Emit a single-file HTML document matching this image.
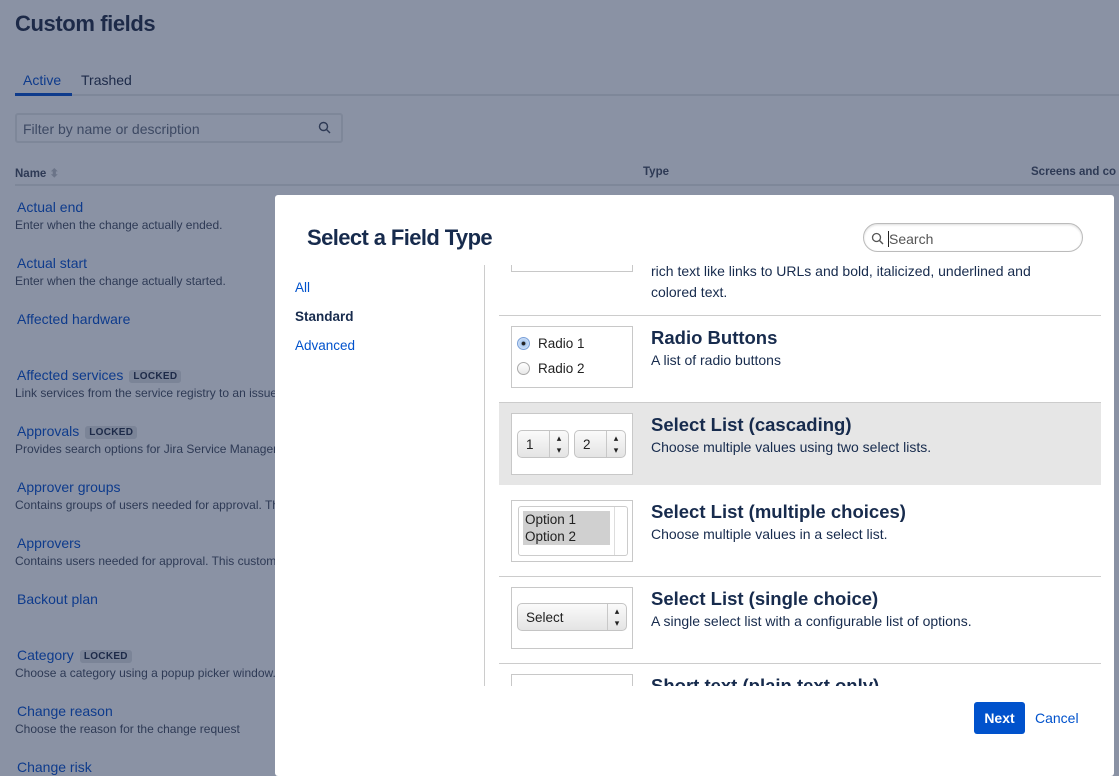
<!DOCTYPE html>
<html><head><style>
*{box-sizing:border-box;margin:0;padding:0}
body{width:1119px;height:776px;overflow:hidden;background:#8a92a4;font-family:"Liberation Sans",sans-serif;position:relative;color:#1d2a48}
.a{position:absolute}
.lk{color:#0e3b8c;font-size:14px}
.ds{color:#2e3a55;font-size:12px}
.badge{display:inline-block;background:#7b8497;color:#1d2a48;font-size:10px;font-weight:bold;padding:1px 4px;border-radius:3px;margin-left:6px;vertical-align:1px;letter-spacing:.3px}
.modal{position:absolute;left:275px;top:195px;width:839px;height:581px;background:#fff;border-radius:3px}
.row{position:absolute;left:224px;width:602px;border-bottom:1px solid #ccc}
.pv{position:absolute;left:12px;width:122px;height:62px;border:1px solid #c8c8c8;background:#fff}
.t{position:absolute;left:152px;font-size:18.5px;font-weight:bold;color:#172b4d}
.d{position:absolute;left:152px;font-size:14px;color:#172b4d}
.sel{position:absolute;height:28px;border:1px solid #c4c4c4;border-radius:5px;background:linear-gradient(#fafafa,#e4e4e4);font-size:13.5px;color:#222}
.arr{position:absolute;right:0;top:0;width:19px;height:26px;border-left:1px solid #c8c8c8;font-size:9px;text-align:center;line-height:12px;padding-top:1px}
</style></head><body>
<div class="a" style="left:15px;top:11px;font-size:22px;font-weight:bold;letter-spacing:-0.4px;color:#1d2a48">Custom fields</div>
<div class="a" style="left:23px;top:72px;font-size:14px;color:#0e3b8c">Active</div>
<div class="a" style="left:81px;top:72px;font-size:14px;color:#1d2a48">Trashed</div>
<div class="a" style="left:15px;top:94px;width:1104px;height:2px;background:#7e8799"></div>
<div class="a" style="left:15px;top:93px;width:57px;height:3px;background:#0e3b8c"></div>
<div class="a" style="left:15px;top:113px;width:328px;height:30px;border:2px solid #7e8799;border-radius:3px;background:#8a92a4"></div>
<div class="a" style="left:23px;top:121px;font-size:14px;color:#3d4963">Filter by name or description</div>
<svg class="a" style="left:318px;top:121px" width="13" height="13" viewBox="0 0 13 13"><circle cx="5.5" cy="5.5" r="4" fill="none" stroke="#2e3a55" stroke-width="1.4"/><path d="M8.5 8.5L12 12" stroke="#2e3a55" stroke-width="1.4"/></svg>
<div class="a" style="left:15px;top:166px;font-size:11.5px;font-weight:bold;color:#2e3a55">Name <span style="color:#6b7488">⬍</span></div>
<div class="a" style="left:643px;top:166px;font-size:11.5px;font-weight:bold;color:#2e3a55">Type</div>
<div class="a" style="left:1031px;top:166px;font-size:11.5px;font-weight:bold;color:#2e3a55;white-space:nowrap">Screens and co</div>
<div class="a" style="left:15px;top:184px;width:1104px;height:2px;background:#7e8799"></div>

<div class="a lk" style="left:17px;top:199px">Actual end</div><div class="a ds" style="left:15px;top:218px">Enter when the change actually ended.</div>
<div class="a lk" style="left:17px;top:255px">Actual start</div><div class="a ds" style="left:15px;top:274px">Enter when the change actually started.</div>
<div class="a lk" style="left:17px;top:311px">Affected hardware</div>
<div class="a lk" style="left:17px;top:367px">Affected services<span class="badge">LOCKED</span></div><div class="a ds" style="left:15px;top:386px;white-space:nowrap">Link services from the service registry to an issue</div>
<div class="a lk" style="left:17px;top:423px">Approvals<span class="badge">LOCKED</span></div><div class="a ds" style="left:15px;top:442px;white-space:nowrap">Provides search options for Jira Service Management</div>
<div class="a lk" style="left:17px;top:479px">Approver groups</div><div class="a ds" style="left:15px;top:498px;white-space:nowrap">Contains groups of users needed for approval. This</div>
<div class="a lk" style="left:17px;top:535px">Approvers</div><div class="a ds" style="left:15px;top:554px;white-space:nowrap">Contains users needed for approval. This custom fie</div>
<div class="a lk" style="left:17px;top:591px">Backout plan</div>
<div class="a lk" style="left:17px;top:647px">Category<span class="badge">LOCKED</span></div><div class="a ds" style="left:15px;top:666px;white-space:nowrap">Choose a category using a popup picker window.</div>
<div class="a lk" style="left:17px;top:703px">Change reason</div><div class="a ds" style="left:15px;top:722px;white-space:nowrap">Choose the reason for the change request</div>
<div class="a lk" style="left:17px;top:759px">Change risk</div>

<div class="modal">
<div class="a" style="left:32px;top:30px;font-size:22px;font-weight:bold;letter-spacing:-0.6px;color:#172b4d">Select a Field Type</div>
<div class="a" style="left:588px;top:28px;width:220px;height:29px;border:1px solid #bbb;border-radius:15px;box-shadow:inset 0 1px 2px #ddd"></div>
<svg class="a" style="left:596px;top:37px" width="13" height="13" viewBox="0 0 13 13"><circle cx="5.5" cy="5.5" r="4" fill="none" stroke="#555" stroke-width="1.3"/><path d="M8.5 8.5L12 12" stroke="#555" stroke-width="1.4"/></svg>
<div class="a" style="left:613px;top:36px;width:1px;height:16px;background:#222"></div>
<div class="a" style="left:614px;top:36px;font-size:14px;color:#555">Search</div>
<div class="a" style="left:20px;top:85px;font-size:13.5px;color:#0052cc">All</div>
<div class="a" style="left:20px;top:114px;font-size:13.5px;font-weight:bold;color:#172b4d">Standard</div>
<div class="a" style="left:20px;top:143px;font-size:13.5px;color:#0052cc">Advanced</div>
<div class="a" style="left:209px;top:70px;width:1px;height:421px;background:#ccc"></div>
<div class="a" style="left:210px;top:70px;width:616px;height:421px;overflow:hidden">
 <div class="row" style="left:14px;top:-60px;height:111px;">
  <div class="pv" style="top:5px;"><div class="a" style="left:8px;top:-2px;width:106px;height:52px;border:1px solid #bbb;border-radius:3px"></div><div class="a" style="right:8px;top:39px;font-size:8px;color:#888">◢</div></div>
  <div class="d" style="top:56px;line-height:21px">rich text like links to URLs and bold, italicized, underlined and<br>colored text.</div>
 </div>
 <div class="row" style="left:14px;top:51px;height:87px">
  <div class="pv" style="top:10px">
   <div class="a" style="left:5px;top:10px;width:13px;height:13px;border-radius:50%;border:1px solid #7aa0d8;background:radial-gradient(#222 20%,#a9c8f0 30%,#e6f0fd)"></div>
   <div class="a" style="left:26px;top:9px;font-size:13.5px;color:#222">Radio 1</div>
   <div class="a" style="left:5px;top:35px;width:13px;height:13px;border-radius:50%;border:1px solid #aaa;background:linear-gradient(#fff,#e8e8e8)"></div>
   <div class="a" style="left:26px;top:34px;font-size:13.5px;color:#222">Radio 2</div>
  </div>
  <div class="t" style="top:11px">Radio Buttons</div><div class="d" style="top:36px">A list of radio buttons</div>
 </div>
 <div class="row" style="left:14px;top:138px;height:85px;background:#e6e6e6;border-bottom:3px solid #fff">
  <div class="pv" style="top:10px">
   <div class="sel" style="left:5px;top:16px;width:52px"><span class="a" style="left:8px;top:6px">1</span><div class="arr">▴<br>▾</div></div>
   <div class="sel" style="left:62px;top:16px;width:52px"><span class="a" style="left:8px;top:6px">2</span><div class="arr">▴<br>▾</div></div>
  </div>
  <div class="t" style="top:11px">Select List (cascading)</div><div class="d" style="top:36px">Choose multiple values using two select lists.</div>
 </div>
 <div class="row" style="left:14px;top:225px;height:87px">
  <div class="pv" style="top:10px">
   <div class="a" style="left:6px;top:5px;width:110px;height:50px;border:1px solid #ccc;border-radius:3px"></div>
   <div class="a" style="left:11px;top:10px;width:87px;height:34px;background:#d0d0d0;font-size:13.5px;color:#222;line-height:17px;padding-left:2px">Option 1<br>Option 2</div>
   <div class="a" style="left:102px;top:6px;width:1px;height:48px;background:#ddd"></div>
  </div>
  <div class="t" style="top:11px">Select List (multiple choices)</div><div class="d" style="top:36px">Choose multiple values in a select list.</div>
 </div>
 <div class="row" style="left:14px;top:312px;height:87px">
  <div class="pv" style="top:10px">
   <div class="sel" style="left:5px;top:15px;width:110px"><span class="a" style="left:8px;top:6px">Select</span><div class="arr">▴<br>▾</div></div>
  </div>
  <div class="t" style="top:11px">Select List (single choice)</div><div class="d" style="top:36px">A single select list with a configurable list of options.</div>
 </div>
 <div class="row" style="left:14px;top:399px;height:87px;border:none">
  <div class="pv" style="top:10px"></div>
  <div class="t" style="top:11px">Short text (plain text only)</div>
 </div>
</div>
<div class="a" style="left:699px;top:507px;width:51px;height:32px;background:#0052cc;border-radius:3px;color:#fff;font-size:14px;font-weight:bold;text-align:center;line-height:32px">Next</div>
<div class="a" style="left:760px;top:515px;font-size:14px;color:#0052cc">Cancel</div>
</div>
</body></html>
